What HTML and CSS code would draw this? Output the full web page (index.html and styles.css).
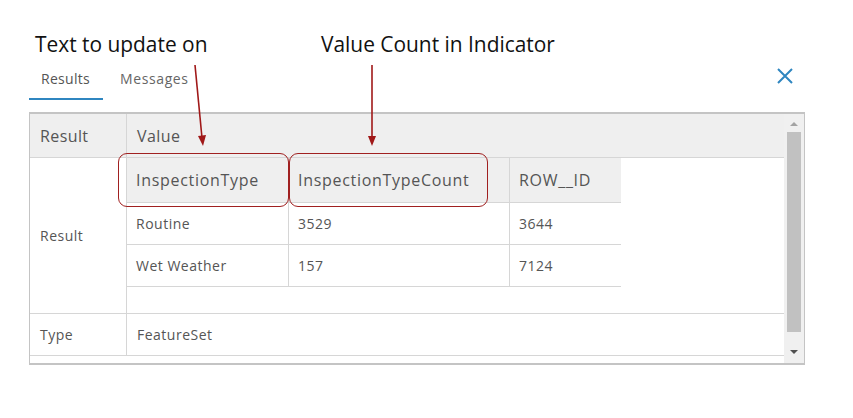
FILE: index.html
```html
<!DOCTYPE html>
<html lang="en">

<head>
    <meta charset="UTF-8" />
    <title>Results</title>
    <link rel="stylesheet" href="styles.css">
</head>

<body>
    <div class="page">
        <div class="notes">
            <span class="note note-left">Text to update on</span>
            <span class="note note-right">Value Count in Indicator</span>
        </div>

        <div class="tabs">
            <span class="tab active">Results</span>
            <span class="tab">Messages</span>
            <span class="close">
                <svg width="16" height="16" viewBox="0 0 16 16">
                    <path d="M1 1 L15 15 M15 1 L1 15" stroke="#2f86c0" stroke-width="2" fill="none" />
                </svg>
            </span>
        </div>

        <div class="panel">
            <div class="content">
                <table class="outer">
                    <tr class="head">
                        <td class="key">Result</td>
                        <td>Value</td>
                    </tr>
                    <tr class="result-row">
                        <td class="key">Result</td>
                        <td class="nested">
                            <table class="inner">
                                <tr class="head">
                                    <td class="c1">InspectionType</td>
                                    <td class="c2">InspectionTypeCount</td>
                                    <td class="c3">ROW__ID</td>
                                </tr>
                                <tr>
                                    <td>Routine</td>
                                    <td>3529</td>
                                    <td>3644</td>
                                </tr>
                                <tr>
                                    <td>Wet Weather</td>
                                    <td>157</td>
                                    <td>7124</td>
                                </tr>
                            </table>
                        </td>
                    </tr>
                    <tr class="type-row">
                        <td class="key">Type</td>
                        <td>FeatureSet</td>
                    </tr>
                </table>
            </div>
            <div class="scrollbar">
                <span class="arrow up"></span>
                <span class="thumb"></span>
                <span class="arrow down"></span>
            </div>
        </div>

        <!-- annotation overlay -->
        <span class="mark mark-a"></span>
        <span class="mark mark-b"></span>
        <svg class="arrows" width="853" height="418" viewBox="0 0 853 418">
            <path d="M195 65 L202 138" stroke="#a01818" stroke-width="1.6" fill="none" />
            <path d="M198 136 L203 146 L206 135 Z" fill="#a01818" />
            <path d="M372 65 L372 138" stroke="#a01818" stroke-width="1.6" fill="none" />
            <path d="M368 136 L372 146 L376 136 Z" fill="#a01818" />
        </svg>
    </div>
</body>

</html>
```

FILE: styles.css
```css
body {
    margin: 0;
    background: #fff;
    font-family: 'Open Sans', Lato, sans-serif;
    color: #555;
}

.page {
    position: relative;
    width: 853px;
    height: 418px;
}

.notes {
    height: 62px;
    position: relative;
}

.note {
    position: absolute;
    top: 30px;
    font-size: 20.9px;
    color: #111;
}

.note-left {
    left: 35px;
}

.note-right {
    left: 321px;
}

.tabs {
    display: flex;
    align-items: flex-end;
    height: 38px;
    margin-left: 29px;
    width: 776px;
    position: relative;
}

.tab {
    font-size: 14px;
    letter-spacing: 0.3px;
    color: #666;
    padding: 0 12px 10px;
    border-bottom: 2px solid transparent;
}

.tab.active {
    border-bottom-color: #2f86c0;
    color: #555;
    padding-right: 13px;
}

.tab + .tab {
    padding-left: 17px;
    letter-spacing: 0.6px;
}

.close {
    position: absolute;
    right: 12px;
    top: 5px;
}

.panel {
    margin: 12px 0 0 29px;
    width: 774px;
    height: 249px;
    border: 1px solid #c4c4c4;
    border-top-width: 2px;
    border-bottom-width: 2px;
    display: flex;
}

.content {
    flex: 1;
    border-bottom: 1px solid #d6d6d6;
    height: 241px;
}

table {
    border-collapse: collapse;
}

.outer {
    width: 100%;
    font-size: 16px;
    letter-spacing: 0.4px;
}

.outer td {
    padding: 0 10px;
    border: 1px solid #d6d6d6;
}

.outer tr:first-child td {
    border-top: none;
}

.outer td:first-child {
    border-left: none;
}

.outer td:last-child {
    border-right: none;
}

.outer .head td {
    background: #efefef;
    height: 43px;
    color: #555;
}

.key {
    width: 76px;
}

.result-row td.key {
    height: 155px;
    font-size: 14px;
    letter-spacing: 0.5px;
}

.nested {
    padding: 0 !important;
    vertical-align: top;
}

.inner td {
    border: none;
    border-right: 1px solid #d6d6d6;
    border-bottom: 1px solid #d6d6d6;
    height: 41px;
    padding: 0 9px;
    font-size: 14px;
    letter-spacing: 0.5px;
}

.inner .head td {
    height: 44px;
    font-size: 16px;
    letter-spacing: 0.7px;
}

.inner td:last-child {
    border-right: none;
}

.inner .c1 {
    width: 143px;
}

.inner .c2 {
    width: 202px;
}

.inner .c3 {
    width: 93px;
}

.type-row td {
    height: 41px;
    font-size: 14px;
    letter-spacing: 0.5px;
}

.scrollbar {
    width: 20px;
    background: #f0f0f0;
    display: flex;
    flex-direction: column;
    align-items: center;
}

.thumb {
    width: 14px;
    flex: 1;
    background: #c1c1c1;
    margin: 0 0 18px;
}

.arrow {
    width: 0;
    height: 0;
    border-left: 4px solid transparent;
    border-right: 4px solid transparent;
}

.arrow.up {
    border-bottom: 4px solid #a3a3a3;
    margin: 8px 0 6px;
}

.arrow.down {
    border-top: 4px solid #505050;
    margin: 0 0 9px;
}

.mark {
    position: absolute;
    top: 153px;
    height: 54px;
    border: 1px solid #a02020;
    border-radius: 9px;
    box-sizing: border-box;
}

.mark-a {
    left: 118px;
    width: 171px;
}

.mark-b {
    left: 289px;
    width: 199px;
}

.arrows {
    position: absolute;
    left: 0;
    top: 0;
    pointer-events: none;
}
```
